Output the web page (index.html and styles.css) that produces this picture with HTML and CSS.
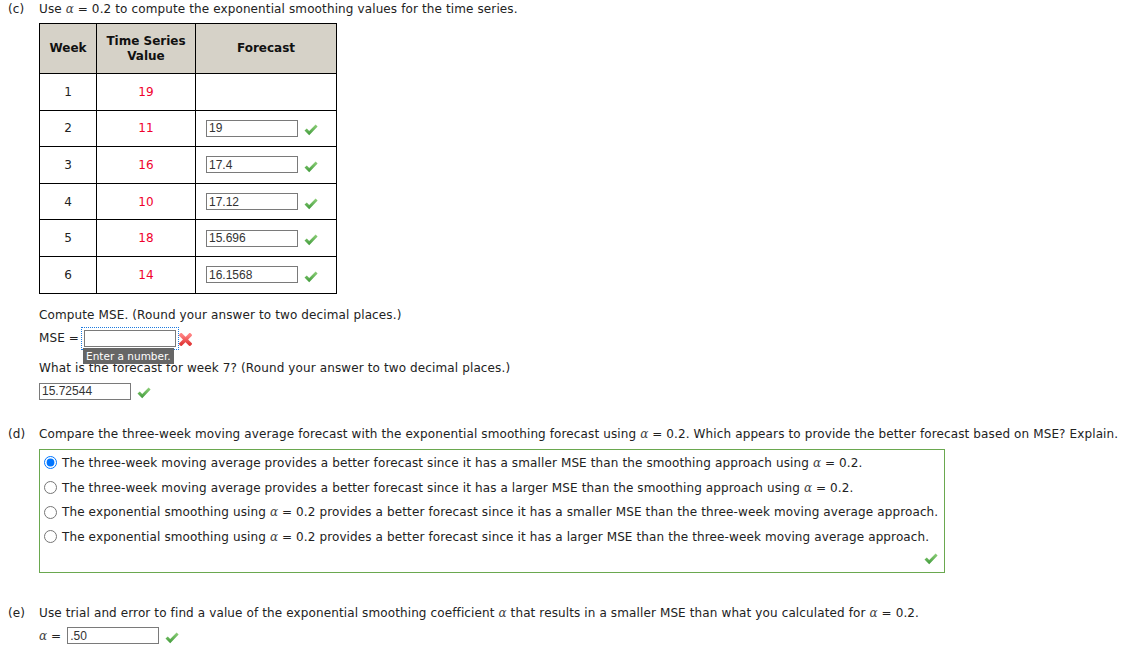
FILE: index.html
```html
<!DOCTYPE html>
<html lang="en">
<head>
  <meta charset="UTF-8" />
  <title>Exponential Smoothing</title>
  <link rel="stylesheet" href="styles.css">
</head>
<body>
  <svg width="0" height="0" class="defs">
    <defs>
      <linearGradient id="chk" x1="0" y1="0" x2="0" y2="1">
        <stop offset="0" stop-color="#8fd07a" />
        <stop offset="1" stop-color="#3f9a3a" />
      </linearGradient>
      <linearGradient id="crs" x1="0" y1="0" x2="0" y2="1">
        <stop offset="0" stop-color="#ff8080" />
        <stop offset="1" stop-color="#e23a3a" />
      </linearGradient>
      <symbol id="check" viewBox="0 0 14 12">
        <path d="M0.5 6.6 L2.8 4.4 L5.2 6.9 L11.6 0.6 L13.6 2.6 L5.2 11.2 Z" fill="url(#chk)" />
      </symbol>
      <symbol id="cross" viewBox="0 0 12 12">
        <path d="M2 2 L10 10 M10 2 L2 10" stroke="url(#crs)" stroke-width="3.4" stroke-linecap="square" fill="none" />
      </symbol>
    </defs>
  </svg>

  <!-- Part (c) -->
  <div class="part">
    <span class="part-label">(c)</span>
    <div class="part-body">
      <p class="prompt">Use <i class="alpha">α</i> = 0.2 to compute the exponential smoothing values for the time series.</p>

      <table class="series">
        <thead>
          <tr>
            <th class="col-week">Week</th>
            <th class="col-value">Time Series<br>Value</th>
            <th class="col-forecast">Forecast</th>
          </tr>
        </thead>
        <tbody>
          <tr><td>1</td><td class="val">19</td><td></td></tr>
          <tr><td>2</td><td class="val">11</td><td class="fc"><input class="num" value="19"><svg class="ok"><use href="#check"/></svg></td></tr>
          <tr><td>3</td><td class="val">16</td><td class="fc"><input class="num" value="17.4"><svg class="ok"><use href="#check"/></svg></td></tr>
          <tr><td>4</td><td class="val">10</td><td class="fc"><input class="num" value="17.12"><svg class="ok"><use href="#check"/></svg></td></tr>
          <tr><td>5</td><td class="val">18</td><td class="fc"><input class="num" value="15.696"><svg class="ok"><use href="#check"/></svg></td></tr>
          <tr><td>6</td><td class="val">14</td><td class="fc"><input class="num" value="16.1568"><svg class="ok"><use href="#check"/></svg></td></tr>
        </tbody>
      </table>

      <p class="question mse-q">Compute MSE. (Round your answer to two decimal places.)</p>
      <div class="answer-row mse-row">
        <span class="lead">MSE =</span>
        <span class="field focused">
          <input class="num" value="">
          <span class="tip">Enter a number.</span>
        </span>
        <svg class="bad"><use href="#cross"/></svg>
      </div>

      <p class="question week-q">What is the forecast for week 7? (Round your answer to two decimal places.)</p>
      <div class="answer-row week-row">
        <input class="num" value="15.72544">
        <svg class="ok"><use href="#check"/></svg>
      </div>
    </div>
  </div>

  <!-- Part (d) -->
  <div class="part part-d">
    <span class="part-label">(d)</span>
    <div class="part-body">
      <p class="prompt">Compare the three-week moving average forecast with the exponential smoothing forecast using <i class="alpha">α</i> = 0.2. Which appears to provide the better forecast based on MSE? Explain.</p>
      <div class="choices">
        <label class="choice"><input type="radio" name="d" checked><span>The three-week moving average provides a better forecast since it has a smaller MSE than the smoothing approach using <i class="alpha">α</i> = 0.2.</span></label>
        <label class="choice"><input type="radio" name="d"><span>The three-week moving average provides a better forecast since it has a larger MSE than the smoothing approach using <i class="alpha">α</i> = 0.2.</span></label>
        <label class="choice"><input type="radio" name="d"><span>The exponential smoothing using <i class="alpha">α</i> = 0.2 provides a better forecast since it has a smaller MSE than the three-week moving average approach.</span></label>
        <label class="choice"><input type="radio" name="d"><span>The exponential smoothing using <i class="alpha">α</i> = 0.2 provides a better forecast since it has a larger MSE than the three-week moving average approach.</span></label>
        <div class="choices-mark"><svg class="ok"><use href="#check"/></svg></div>
      </div>
    </div>
  </div>

  <!-- Part (e) -->
  <div class="part part-e">
    <span class="part-label">(e)</span>
    <div class="part-body">
      <p class="prompt">Use trial and error to find a value of the exponential smoothing coefficient <i class="alpha">α</i> that results in a smaller MSE than what you calculated for <i class="alpha">α</i> = 0.2.</p>
      <div class="answer-row alpha-row">
        <span class="lead"><i class="alpha">α</i> =</span>
        <input class="num" value=".50">
        <svg class="ok"><use href="#check"/></svg>
      </div>
    </div>
  </div>
</body>
</html>
```

FILE: styles.css
```css
* {
  box-sizing: border-box;
}

html, body {
  margin: 0;
  padding: 0;
  background: #ffffff;
}

body {
  padding-top: 1px;
  font-family: "DejaVu Sans", Verdana, sans-serif;
  font-size: 12px;
  line-height: 16px;
  letter-spacing: 0.12px;
  color: #222;
}

.defs {
  position: absolute;
}

p {
  margin: 0;
}

.alpha {
  font-family: "DejaVu Serif", "Liberation Serif", serif;
  font-style: italic;
  color: #444;
  letter-spacing: 0;
}

.part {
  display: flex;
  padding-left: 8px;
}

.part-label {
  width: 31px;
  flex: none;
}

.part-body {
  flex: 1;
}

/* table */
.series {
  border-collapse: collapse;
  margin-top: 6px;
  table-layout: fixed;
  letter-spacing: 0;
}

.series th,
.series td {
  border: 1px solid #000;
  text-align: center;
  padding: 0;
}

.series th {
  background-color: #d6d2c8;
  font-weight: bold;
  font-size: 12px;
  line-height: 15px;
  height: 50px;
  color: #111;
}

.series td {
  height: 36.6px;
}

.col-week { width: 57px; }
.col-value { width: 99px; }
.col-forecast { width: 141px; }

.series .val {
  color: #f0002c;
}

.series .fc {
  text-align: left;
  padding-left: 10px;
  white-space: nowrap;
}

/* inputs and marks */
.num {
  width: 92px;
  height: 17px;
  border: 1px solid #7a7a7a;
  padding: 0 2px;
  font-family: "Liberation Sans", Arial, sans-serif;
  font-size: 12px;
  letter-spacing: 0;
  color: #333;
  vertical-align: middle;
  margin: 0;
  background: #fff;
}

.ok {
  width: 14px;
  height: 12px;
  margin-left: 6px;
  vertical-align: middle;
  position: relative;
  top: 2px;
}

.bad {
  width: 13px;
  height: 13px;
  margin-left: 3px;
  vertical-align: middle;
  position: relative;
  top: 1px;
}

.question {
  line-height: 16px;
}

.mse-q {
  margin-top: 13px;
}

.answer-row {
  display: flex;
  align-items: center;
  height: 23px;
}

.mse-row {
  margin-top: 4px;
}

.mse-row .lead {
  margin-right: 5px;
}

.field {
  position: relative;
  display: inline-flex;
}

.field.focused {
  outline: 1px dotted #1e7be0;
  outline-offset: 2px;
}

.tip {
  position: absolute;
  left: -1px;
  top: 18px;
  background-color: #666;
  color: #fff;
  font-size: 10.5px;
  line-height: 16px;
  letter-spacing: 0;
  padding: 0 3px;
  white-space: nowrap;
  z-index: 10;
}

.week-q {
  margin-top: 10px;
}

.week-row {
  margin-top: 4px;
}

/* part d */
.part-d {
  margin-top: 23px;
}

.choices {
  margin-top: 7px;
  width: 906px;
  border: 1px solid #6aa84f;
  padding: 1px 3px 0 3px;
}

.choice {
  display: flex;
  align-items: center;
  height: 24.7px;
  white-space: nowrap;
}

.choice input {
  width: 13px;
  height: 13px;
  margin: 0 5px 0 1px;
}

.choices-mark {
  display: flex;
  justify-content: flex-end;
  height: 23px;
  padding: 4px 3px 0 0;
}

.choices-mark .ok {
  top: 0;
}

/* part e */
.part-e {
  margin-top: 32px;
}

.alpha-row {
  margin-top: 3px;
}

.alpha-row .lead {
  margin-right: 6px;
}
```
